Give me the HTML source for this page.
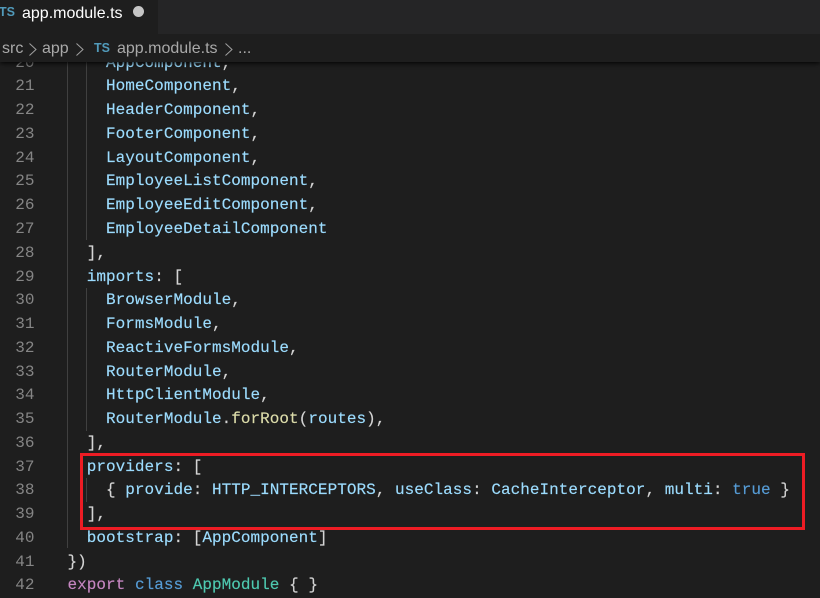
<!DOCTYPE html>
<html><head><meta charset="utf-8">
<style>
html,body{margin:0;padding:0;background:#1e1e1e}
#r{position:relative;width:820px;height:598px;overflow:hidden;background:#1e1e1e;font-family:"Liberation Mono",monospace;font-size:16px;color:#9cdcfe}
.l{position:absolute;left:67.5px;white-space:pre;line-height:24px;height:24px;letter-spacing:.03px;-webkit-text-stroke:.15px}
.n{position:absolute;left:0;width:34.5px;text-align:right;color:#858585;line-height:24px;height:24px}
.g{position:absolute;width:1px;background:#404040}
.p{color:#d4d4d4}.k{color:#569cd6}.c{color:#c586c0}.t{color:#4ec9b0}.f{color:#dcdcaa}
.ui{position:absolute;font-family:"Liberation Sans",sans-serif;white-space:nowrap}
.ts{position:absolute;font-family:"Liberation Sans",sans-serif;font-weight:bold;font-size:12.5px;color:#519aba;line-height:14px}
</style></head><body><div id="r">
<div class="g" style="left:67px;top:62px;height:486px"></div>
<div class="g" style="left:86px;top:62px;height:178px"></div>
<div class="g" style="left:86px;top:288px;height:143px"></div>
<div class="g" style="left:86px;top:478px;height:24px"></div>

<div class="n" style="top:51px">20</div><div class="l" style="top:51px">    AppComponent<span class="p">,</span></div>
<div class="n" style="top:74px">21</div><div class="l" style="top:74px">    HomeComponent<span class="p">,</span></div>
<div class="n" style="top:98px">22</div><div class="l" style="top:98px">    HeaderComponent<span class="p">,</span></div>
<div class="n" style="top:122px">23</div><div class="l" style="top:122px">    FooterComponent<span class="p">,</span></div>
<div class="n" style="top:146px">24</div><div class="l" style="top:146px">    LayoutComponent<span class="p">,</span></div>
<div class="n" style="top:169px">25</div><div class="l" style="top:169px">    EmployeeListComponent<span class="p">,</span></div>
<div class="n" style="top:193px">26</div><div class="l" style="top:193px">    EmployeeEditComponent<span class="p">,</span></div>
<div class="n" style="top:217px">27</div><div class="l" style="top:217px">    EmployeeDetailComponent</div>
<div class="n" style="top:241px">28</div><div class="l" style="top:241px"><span class="p">  ],</span></div>
<div class="n" style="top:265px">29</div><div class="l" style="top:265px">  imports<span class="p">: [</span></div>
<div class="n" style="top:288px">30</div><div class="l" style="top:288px">    BrowserModule<span class="p">,</span></div>
<div class="n" style="top:312px">31</div><div class="l" style="top:312px">    FormsModule<span class="p">,</span></div>
<div class="n" style="top:336px">32</div><div class="l" style="top:336px">    ReactiveFormsModule<span class="p">,</span></div>
<div class="n" style="top:360px">33</div><div class="l" style="top:360px">    RouterModule<span class="p">,</span></div>
<div class="n" style="top:383px">34</div><div class="l" style="top:383px">    HttpClientModule<span class="p">,</span></div>
<div class="n" style="top:407px">35</div><div class="l" style="top:407px">    RouterModule<span class="p">.</span><span class="f">forRoot</span><span class="p">(</span>routes<span class="p">),</span></div>
<div class="n" style="top:431px">36</div><div class="l" style="top:431px"><span class="p">  ],</span></div>
<div class="n" style="top:455px">37</div><div class="l" style="top:455px">  providers<span class="p">: [</span></div>
<div class="n" style="top:478px">38</div><div class="l" style="top:478px"><span class="p">    { </span>provide<span class="p">: </span>HTTP_INTERCEPTORS<span class="p">, </span>useClass<span class="p">: </span>CacheInterceptor<span class="p">, </span>multi<span class="p">: </span><span class="k">true</span><span class="p"> }</span></div>
<div class="n" style="top:502px">39</div><div class="l" style="top:502px"><span class="p">  ],</span></div>
<div class="n" style="top:526px">40</div><div class="l" style="top:526px">  bootstrap<span class="p">: [</span>AppComponent<span class="p">]</span></div>
<div class="n" style="top:550px">41</div><div class="l" style="top:550px"><span class="p">})</span></div>
<div class="n" style="top:573px">42</div><div class="l" style="top:573px"><span class="c">export</span> <span class="k">class</span> <span class="t">AppModule</span><span class="p"> { }</span></div>

<div style="position:absolute;left:80px;top:453px;width:719px;height:71px;border:3px solid #ed1c24"></div>

<div style="position:absolute;left:0;top:0;width:820px;height:62px;background:#1e1e1e;box-shadow:0 1px 5px #000"></div>
<div style="position:absolute;left:158px;top:0;width:662px;height:34px;background:#252526"></div>
<div class="ts" style="left:-1px;top:5px">TS</div>
<div class="ui" style="left:22px;top:4px;font-size:16px;line-height:20px;color:#fff">app.module.ts</div>
<div style="position:absolute;left:133px;top:6px;width:11px;height:11px;border-radius:50%;background:#c5c5c5"></div>

<div class="ui" style="left:2px;top:39px;font-size:16px;line-height:20px;color:#a9a9a9">src</div>
<svg style="position:absolute;left:28px;top:42px" width="10" height="16" fill="none" stroke="#a0a0a0" stroke-width="1"><path d="M1.5 1.5 L8 7.5 L1.5 13.5"/></svg>
<div class="ui" style="left:42px;top:39px;font-size:16px;line-height:20px;color:#a9a9a9">app</div>
<svg style="position:absolute;left:75px;top:42px" width="10" height="16" fill="none" stroke="#a0a0a0" stroke-width="1"><path d="M1.5 1.5 L8 7.5 L1.5 13.5"/></svg>
<div class="ts" style="left:94px;top:41px">TS</div>
<div class="ui" style="left:117px;top:39px;font-size:16px;line-height:20px;color:#a9a9a9">app.module.ts</div>
<svg style="position:absolute;left:224px;top:42px" width="10" height="16" fill="none" stroke="#a0a0a0" stroke-width="1"><path d="M1.5 1.5 L8 7.5 L1.5 13.5"/></svg>
<div class="ui" style="left:238px;top:39px;font-size:16px;line-height:20px;color:#a9a9a9">...</div>
</div></body></html>
